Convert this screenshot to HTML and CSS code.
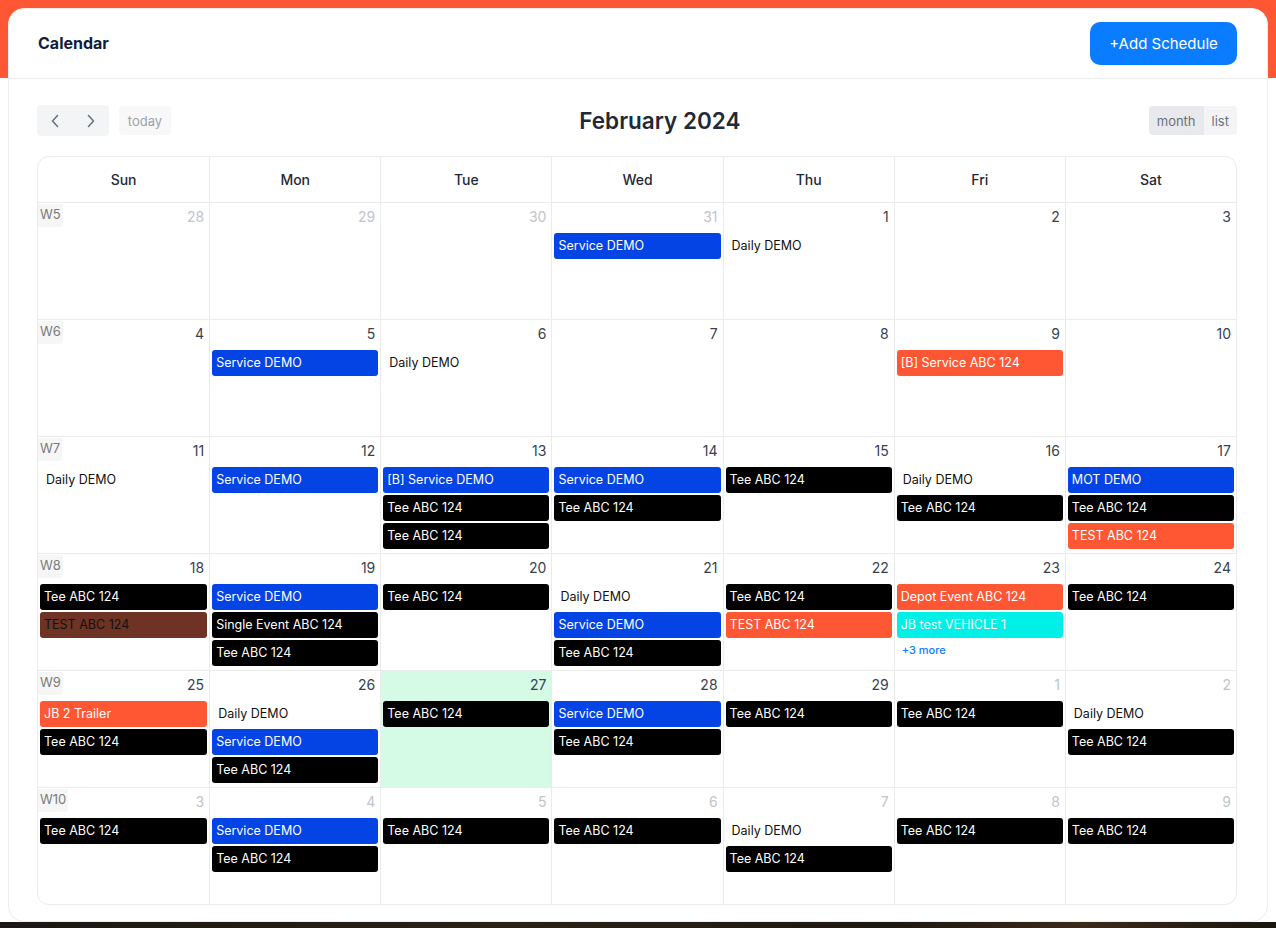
FILE: index.html
```html
<!DOCTYPE html>
<html lang="en">
<head>
    <meta charset="UTF-8">
    <meta name="viewport" content="width=device-width, initial-scale=1.0">
    <title>Calendar</title>
    <link rel="stylesheet" href="styles.css">
</head>
<body>
    <div class="page">
        <section class="card">
            <header class="card-header">
                <h1>Calendar</h1>
                <button class="add-btn">+Add Schedule</button>
            </header>

            <div class="card-body">
                <div class="toolbar">
                    <div class="toolbar-left">
                        <div class="btn-group">
                            <button class="nav-btn" aria-label="prev">
                                <svg width="8" height="14" viewBox="0 0 8 14"><polyline points="6.5,1.5 1.5,7 6.5,12.5" fill="none" stroke="#6b7280" stroke-width="1.6" stroke-linecap="round" stroke-linejoin="round"/></svg>
                            </button>
                            <button class="nav-btn" aria-label="next">
                                <svg width="8" height="14" viewBox="0 0 8 14"><polyline points="1.5,1.5 6.5,7 1.5,12.5" fill="none" stroke="#6b7280" stroke-width="1.6" stroke-linecap="round" stroke-linejoin="round"/></svg>
                            </button>
                        </div>
                        <button class="today-btn">today</button>
                    </div>
                    <h2 class="title">February 2024</h2>
                    <div class="view-group">
                        <button class="view-btn active">month</button>
                        <button class="view-btn">list</button>
                    </div>
                </div>

                <div class="cal">
                    <div class="cal-head">
                        <div>Sun</div><div>Mon</div><div>Tue</div><div>Wed</div><div>Thu</div><div>Fri</div><div>Sat</div>
                    </div>
                    <div class="cal-body">
                        <!-- W5 -->
                        <div class="day other"><span class="week">W5</span><span class="num">28</span></div>
                        <div class="day other"><span class="num">29</span></div>
                        <div class="day other"><span class="num">30</span></div>
                        <div class="day other"><span class="num">31</span><div class="events"><div class="ev blue">Service DEMO</div></div></div>
                        <div class="day"><span class="num">1</span><div class="events"><div class="ev plain">Daily DEMO</div></div></div>
                        <div class="day"><span class="num">2</span></div>
                        <div class="day"><span class="num">3</span></div>

                        <!-- W6 -->
                        <div class="day"><span class="week">W6</span><span class="num">4</span></div>
                        <div class="day"><span class="num">5</span><div class="events"><div class="ev blue">Service DEMO</div></div></div>
                        <div class="day"><span class="num">6</span><div class="events"><div class="ev plain">Daily DEMO</div></div></div>
                        <div class="day"><span class="num">7</span></div>
                        <div class="day"><span class="num">8</span></div>
                        <div class="day"><span class="num">9</span><div class="events"><div class="ev orange">[B] Service ABC 124</div></div></div>
                        <div class="day"><span class="num">10</span></div>

                        <!-- W7 -->
                        <div class="day"><span class="week">W7</span><span class="num">11</span><div class="events"><div class="ev plain">Daily DEMO</div></div></div>
                        <div class="day"><span class="num">12</span><div class="events"><div class="ev blue">Service DEMO</div></div></div>
                        <div class="day"><span class="num">13</span><div class="events"><div class="ev blue">[B] Service DEMO</div><div class="ev black">Tee ABC 124</div><div class="ev black">Tee ABC 124</div></div></div>
                        <div class="day"><span class="num">14</span><div class="events"><div class="ev blue">Service DEMO</div><div class="ev black">Tee ABC 124</div></div></div>
                        <div class="day"><span class="num">15</span><div class="events"><div class="ev black">Tee ABC 124</div></div></div>
                        <div class="day"><span class="num">16</span><div class="events"><div class="ev plain">Daily DEMO</div><div class="ev black">Tee ABC 124</div></div></div>
                        <div class="day"><span class="num">17</span><div class="events"><div class="ev blue">MOT DEMO</div><div class="ev black">Tee ABC 124</div><div class="ev orange">TEST ABC 124</div></div></div>

                        <!-- W8 -->
                        <div class="day"><span class="week">W8</span><span class="num">18</span><div class="events"><div class="ev black">Tee ABC 124</div><div class="ev brown">TEST ABC 124</div></div></div>
                        <div class="day"><span class="num">19</span><div class="events"><div class="ev blue">Service DEMO</div><div class="ev black">Single Event ABC 124</div><div class="ev black">Tee ABC 124</div></div></div>
                        <div class="day"><span class="num">20</span><div class="events"><div class="ev black">Tee ABC 124</div></div></div>
                        <div class="day"><span class="num">21</span><div class="events"><div class="ev plain">Daily DEMO</div><div class="ev blue">Service DEMO</div><div class="ev black">Tee ABC 124</div></div></div>
                        <div class="day"><span class="num">22</span><div class="events"><div class="ev black">Tee ABC 124</div><div class="ev orange">TEST ABC 124</div></div></div>
                        <div class="day"><span class="num">23</span><div class="events"><div class="ev orange">Depot Event ABC 124</div><div class="ev cyan">JB test VEHICLE 1</div><a class="more">+3 more</a></div></div>
                        <div class="day"><span class="num">24</span><div class="events"><div class="ev black">Tee ABC 124</div></div></div>

                        <!-- W9 -->
                        <div class="day"><span class="week">W9</span><span class="num">25</span><div class="events"><div class="ev orange">JB 2 Trailer</div><div class="ev black">Tee ABC 124</div></div></div>
                        <div class="day"><span class="num">26</span><div class="events"><div class="ev plain">Daily DEMO</div><div class="ev blue">Service DEMO</div><div class="ev black">Tee ABC 124</div></div></div>
                        <div class="day today"><span class="num">27</span><div class="events"><div class="ev black">Tee ABC 124</div></div></div>
                        <div class="day"><span class="num">28</span><div class="events"><div class="ev blue">Service DEMO</div><div class="ev black">Tee ABC 124</div></div></div>
                        <div class="day"><span class="num">29</span><div class="events"><div class="ev black">Tee ABC 124</div></div></div>
                        <div class="day other"><span class="num">1</span><div class="events"><div class="ev black">Tee ABC 124</div></div></div>
                        <div class="day other"><span class="num">2</span><div class="events"><div class="ev plain">Daily DEMO</div><div class="ev black">Tee ABC 124</div></div></div>

                        <!-- W10 -->
                        <div class="day other"><span class="week">W10</span><span class="num">3</span><div class="events"><div class="ev black">Tee ABC 124</div></div></div>
                        <div class="day other"><span class="num">4</span><div class="events"><div class="ev blue">Service DEMO</div><div class="ev black">Tee ABC 124</div></div></div>
                        <div class="day other"><span class="num">5</span><div class="events"><div class="ev black">Tee ABC 124</div></div></div>
                        <div class="day other"><span class="num">6</span><div class="events"><div class="ev black">Tee ABC 124</div></div></div>
                        <div class="day other"><span class="num">7</span><div class="events"><div class="ev plain">Daily DEMO</div><div class="ev black">Tee ABC 124</div></div></div>
                        <div class="day other"><span class="num">8</span><div class="events"><div class="ev black">Tee ABC 124</div></div></div>
                        <div class="day other"><span class="num">9</span><div class="events"><div class="ev black">Tee ABC 124</div></div></div>
                    </div>
                </div>
            </div>
        </section>
    </div>
    <div class="footer-bg"></div>
</body>
</html>
```

FILE: styles.css
```css
body,html{
    margin: 0;
    padding: 0;
    height: 100%;
    overflow: hidden;
}

body{
    font-family: Inter, "Noto Sans", sans-serif;
    background: #fff;
}

button{
    font-family: inherit;
    border: none;
    cursor: pointer;
}

.page{
    background: linear-gradient(#ff5733 0 78px, #fff 78px);
    padding: 8px 8px 0;
}

.card{
    height: 912px;
    background: #fff;
    border: 1px solid #ededed;
    border-radius: 16px;
    display: flex;
    flex-direction: column;
}

.card-header{
    height: 69px;
    display: flex;
    align-items: center;
    justify-content: space-between;
    padding: 0 30px 0 29px;
    border-bottom: 1px solid #ececec;
}

.card-header h1{
    margin: 0 0 2px;
    font-size: 16px;
    font-weight: 700;
    color: #0f1e3d;
}

.add-btn{
    height: 43px;
    width: 147px;
    background: #0a7cff;
    color: #fff;
    font-size: 15px;
    border-radius: 10px;
}

.card-body{
    padding: 26px 30px 0 28px;
}

.toolbar{
    display: flex;
    align-items: center;
    justify-content: space-between;
    height: 31px;
}

.toolbar-left{
    display: flex;
    align-items: center;
    gap: 10px;
}

.btn-group{
    display: flex;
    background: #f3f4f6;
    border-radius: 4px;
}

.nav-btn{
    width: 36px;
    height: 31px;
    background: transparent;
    display: flex;
    align-items: center;
    justify-content: center;
}

.today-btn{
    height: 29px;
    width: 52px;
    background: #f8f8f9;
    color: #9ca3af;
    font-size: 13px;
    border-radius: 4px;
}

.title{
    margin: 0;
    font-size: 22.5px;
    font-weight: 600;
    color: #1f2937;
}

.view-group{
    display: flex;
    border-radius: 4px;
    overflow: hidden;
}

.view-btn{
    height: 29px;
    background: #f4f4f6;
    color: #6b7280;
    font-size: 13px;
    padding: 0 8px;
}

.view-btn.active{
    background: #e8e9ec;
}

.cal{
    margin-top: 20px;
    border: 1px solid #ebebeb;
    border-radius: 12px;
    overflow: hidden;
}

.cal-head{
    display: grid;
    grid-template-columns: repeat(7, 1fr);
    height: 45px;
}

.cal-head div{
    display: flex;
    align-items: center;
    justify-content: center;
    font-size: 14px;
    font-weight: 500;
    color: #1f2937;
    border-left: 1px solid #ebebeb;
}

.cal-head div:first-child{
    border-left: none;
}

.cal-body{
    display: grid;
    grid-template-columns: repeat(7, 1fr);
    grid-auto-rows: 117px;
}

.day{
    position: relative;
    border-top: 1px solid #ebebeb;
    border-left: 1px solid #ebebeb;
    padding-top: 30px;
}

.day:nth-child(7n+1){
    border-left: none;
}

.day.today{
    background: #d5fbe7;
}

.num{
    position: absolute;
    top: 5px;
    right: 5px;
    font-size: 14px;
    color: #374151;
}

.other .num{
    color: #c0c4cc;
}

.week{
    position: absolute;
    top: 1px;
    left: 0;
    padding: 2px 2px 5px;
    font-size: 13px;
    color: #7a7a7a;
    background: #f6f6f6;
    border-radius: 0 0 4px 0;
}

.events{
    display: flex;
    flex-direction: column;
    gap: 2px;
    padding: 0 2px;
}

.ev{
    height: 26px;
    line-height: 26px;
    font-size: 12.5px;
    color: #fff;
    padding: 0 4px;
    border-radius: 3px;
    white-space: nowrap;
    overflow: hidden;
}

.ev.plain{
    color: #111;
    padding-left: 6px;
}

.ev.blue{
    background: #0544e4;
}

.ev.black{
    background: #000;
}

.ev.orange{
    background: #ff5733;
}

.ev.brown{
    background: #6e3324;
    color: #111;
}

.ev.cyan{
    background: #00efe6;
}

.more{
    font-size: 11px;
    font-weight: 500;
    color: #0a7cff;
    padding: 3px 5px;
}

.footer-bg{
    height: 20px;
    background: linear-gradient(90deg, #1b1712, #2a2118 40%, #1e1812 70%, #3a2a1a 85%, #1a1510);
}
```
